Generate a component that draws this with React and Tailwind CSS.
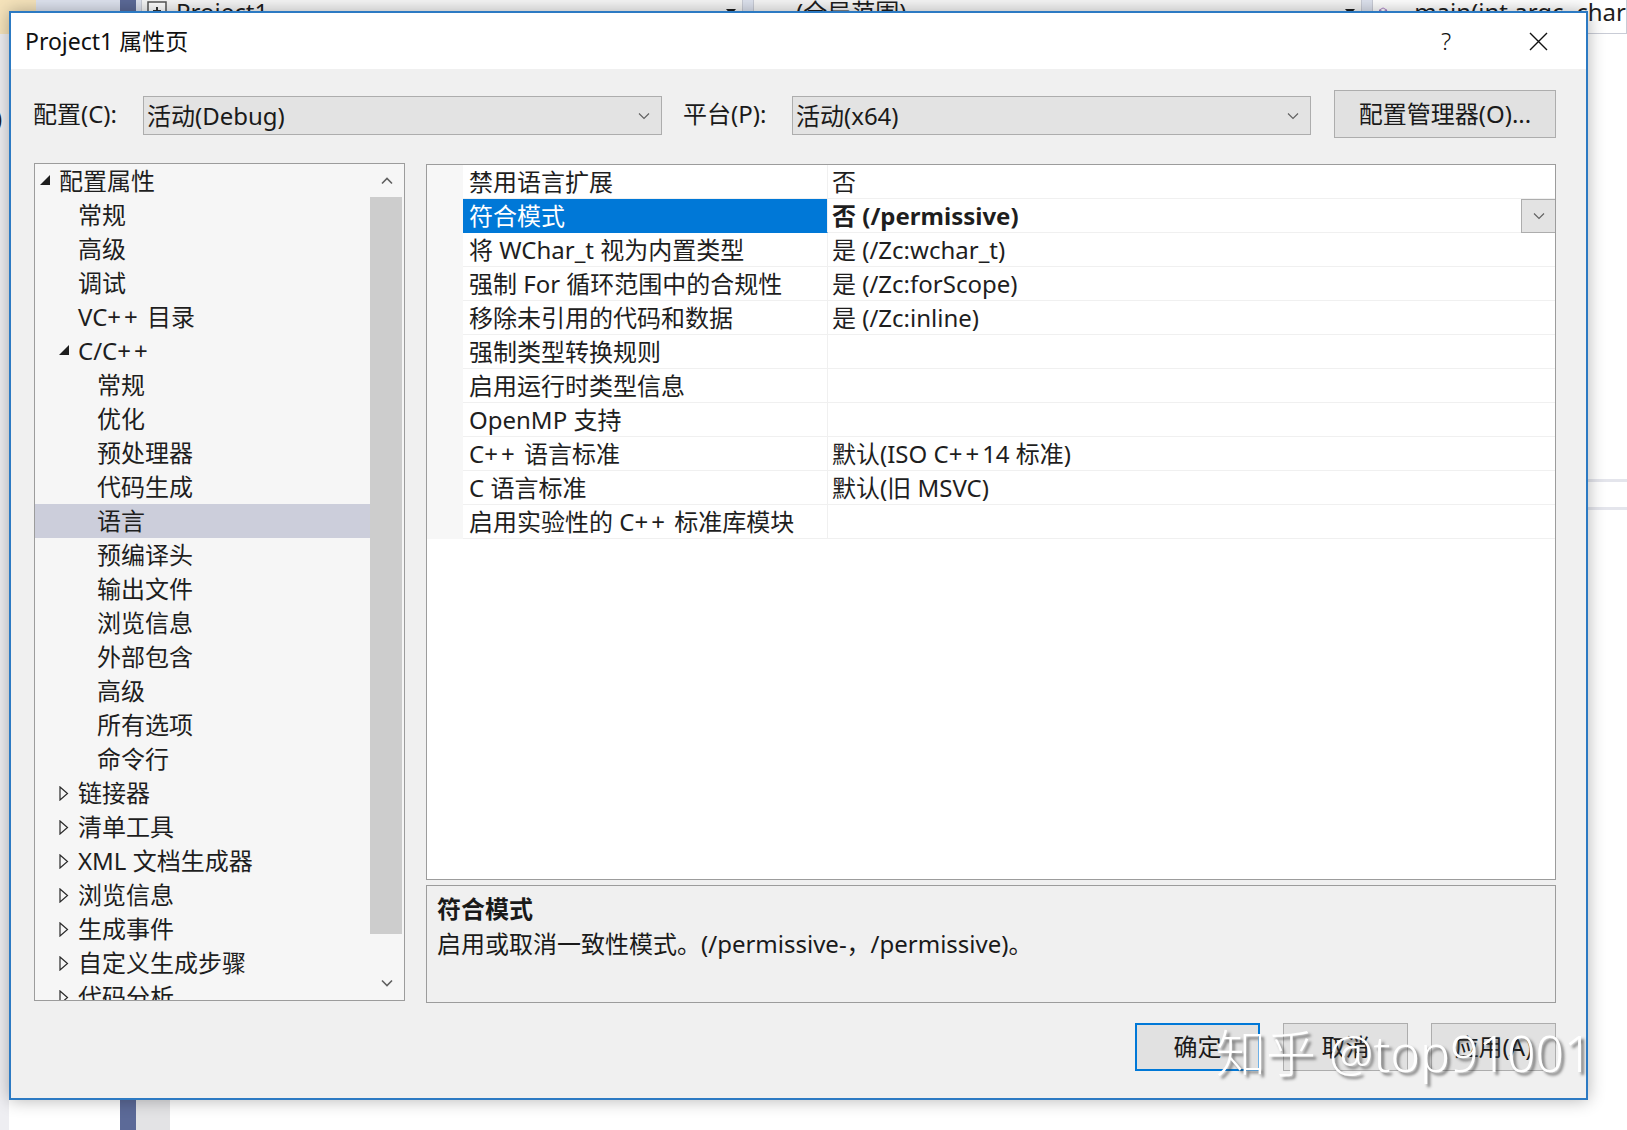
import React from "react";

const FONT = "font-['Noto_Sans','Noto_Sans_CJK_SC',sans-serif]";

// Segoe UI draws "++" with a visible gap between the signs
const Txt = ({ children }) => {
  const parts = String(children).split("++");
  return (
    <>
      {parts.map((p, i) => (
        <React.Fragment key={i}>
          {p}
          {i < parts.length - 1 && <span className="tracking-[3px]">++</span>}
        </React.Fragment>
      ))}
    </>
  );
};

const Chevron = ({ w = 12, h = 8, stroke = "#5f5f5f", sw = 1.1 }) => (
  <svg width={w} height={h} viewBox="0 0 12 8" fill="none">
    <path d="M1 1.5 L6 6.5 L11 1.5" stroke={stroke} strokeWidth={sw} />
  </svg>
);

const OpenArrow = () => (
  <svg width="10" height="10" viewBox="0 0 10 10" className="-mt-[3px]">
    <polygon points="10,0 10,10 0,10" fill="#1e1e1e" />
  </svg>
);

const ClosedArrow = () => (
  <svg width="10" height="15" viewBox="0 0 10 15">
    <polygon points="1,1 8.5,7.5 1,14" fill="none" stroke="#2a2a2a" strokeWidth="1.2" />
  </svg>
);

const treeItems = [
  { lv: 0, text: "配置属性", arrow: "open" },
  { lv: 1, text: "常规" },
  { lv: 1, text: "高级" },
  { lv: 1, text: "调试" },
  { lv: 1, text: "VC++ 目录" },
  { lv: 1, text: "C/C++", arrow: "open" },
  { lv: 2, text: "常规" },
  { lv: 2, text: "优化" },
  { lv: 2, text: "预处理器" },
  { lv: 2, text: "代码生成" },
  { lv: 2, text: "语言", selected: true },
  { lv: 2, text: "预编译头" },
  { lv: 2, text: "输出文件" },
  { lv: 2, text: "浏览信息" },
  { lv: 2, text: "外部包含" },
  { lv: 2, text: "高级" },
  { lv: 2, text: "所有选项" },
  { lv: 2, text: "命令行" },
  { lv: 1, text: "链接器", arrow: "closed" },
  { lv: 1, text: "清单工具", arrow: "closed" },
  { lv: 1, text: "XML 文档生成器", arrow: "closed" },
  { lv: 1, text: "浏览信息", arrow: "closed" },
  { lv: 1, text: "生成事件", arrow: "closed" },
  { lv: 1, text: "自定义生成步骤", arrow: "closed" },
  { lv: 1, text: "代码分析", arrow: "closed" },
];

const indent = ["pl-[5px]", "pl-[24px]", "pl-[43px]"];

const props = [
  ["禁用语言扩展", "否"],
  ["符合模式", "否 (/permissive)", true],
  ["将 WChar_t 视为内置类型", "是 (/Zc:wchar_t)"],
  ["强制 For 循环范围中的合规性", "是 (/Zc:forScope)"],
  ["移除未引用的代码和数据", "是 (/Zc:inline)"],
  ["强制类型转换规则", ""],
  ["启用运行时类型信息", ""],
  ["OpenMP 支持", ""],
  ["C++ 语言标准", "默认(ISO C++14 标准)"],
  ["C 语言标准", "默认(旧 MSVC)"],
  ["启用实验性的 C++ 标准库模块", ""],
];

const Combo = ({ text }) => (
  <div className="w-[519px] h-[39px] mt-[3px] bg-[#e3e3e3] border border-[#adadad] flex items-center pl-[3px] pr-[11px]">
    <span className="text-[24px] leading-none text-[#1a1a1a] flex-1">{text}</span>
    <Chevron />
  </div>
);

const Tree = () => (
  <div className="w-[371px] h-[838px] border border-[#9c9c9c] bg-[#f6f6f6] flex overflow-hidden">
    <div className="flex-1 flex flex-col overflow-hidden">
      {treeItems.map((it, i) => (
        <div
          key={i}
          className={`h-[34px] shrink-0 flex items-center ${indent[it.lv]} ${it.selected ? "bg-[#cccedb]" : ""}`}
        >
          <span className="w-[19px] shrink-0 flex items-center">
            {it.arrow === "open" && <OpenArrow />}
            {it.arrow === "closed" && <ClosedArrow />}
          </span>
          <span className="text-[24px] leading-none text-[#1e1e1e] whitespace-nowrap">
            <Txt>{it.text}</Txt>
          </span>
        </div>
      ))}
    </div>
    <div className="w-[34px] shrink-0 flex flex-col">
      <div className="h-[33px] flex items-center justify-center">
        <svg width="12" height="8" viewBox="0 0 12 8" fill="none">
          <path d="M1 6.5 L6 1.5 L11 6.5" stroke="#606060" strokeWidth="1.6" />
        </svg>
      </div>
      <div className="flex-1 flex flex-col pr-[2px]">
        <div className="h-[737px] bg-[#cdcdcd]" />
      </div>
      <div className="h-[34px] flex items-center justify-center">
        <Chevron stroke="#606060" sw={1.6} />
      </div>
    </div>
  </div>
);

const Grid = () => (
  <div className="w-[1130px] h-[716px] border border-[#9c9c9c] bg-white flex flex-col overflow-hidden">
    {props.map(([name, value, sel], i) => (
      <div key={i} className="h-[34px] shrink-0 flex">
        <div className="w-[36px] shrink-0 bg-[#f7f7f7]" />
        <div
          className={`w-[365px] shrink-0 flex items-center pl-[6px] border-b border-r border-[#f0f0f0] text-[24px] leading-none whitespace-nowrap ${
            sel ? "bg-[#0078d7] text-white border-b-[#0078d7]" : "text-[#1e1e1e]"
          }`}
        >
          <span>
            <Txt>{name}</Txt>
          </span>
        </div>
        <div className="flex-1 flex items-center pl-[4px] border-b border-[#f0f0f0] text-[24px] leading-none text-[#1e1e1e] whitespace-nowrap">
          <span className={`flex-1 ${sel ? "font-bold" : ""}`}>
            <Txt>{value}</Txt>
          </span>
          {sel && (
            <div className="w-[34px] h-[34px] bg-[#e3e3e3] border border-[#adadad] border-r-0 flex items-center justify-center">
              <Chevron />
            </div>
          )}
        </div>
      </div>
    ))}
  </div>
);

const Button = ({ children, primary }) => (
  <div
    className={`w-[125px] h-[48px] bg-[#e1e1e1] flex items-center justify-center text-[24px] leading-none text-[#1a1a1a] ${
      primary ? "border-2 border-[#0078d7]" : "border border-[#adadad]"
    }`}
  >
    {children}
  </div>
);

const Background = () => (
  <>
    {/* vertical strips of the IDE behind the dialog */}
    <div className="absolute left-0 top-0 w-[9px] h-full bg-[#eeeef2]" />
    <div className="absolute left-0 top-[19px] w-[8px] h-[2px] bg-[#3a3a3a]" />
    <div className="absolute left-[120px] top-0 w-[16px] h-full bg-[#5c6a98]" />
    <div className="absolute left-[136px] top-0 w-[34px] h-full bg-[#e3e3e5]" />
    {/* toolbar with combo boxes */}
    <div className="absolute left-0 top-[-10px] w-full h-[44px] flex text-[24px] leading-none text-[#1e1e1e]">
      <div className="w-[36px] bg-[#f5e3bb]" />
      <div className="w-[84px] bg-[#dee3ef]" />
      <div className="w-[16px] bg-[#5c6a98]" />
      <div className="w-[5px] bg-[#dee3ef]" />
      <div className="w-[602px] bg-[#f6f6f6] border border-[#c9ccd6] flex items-center pl-[4px] pr-[6px] gap-[6px]">
        <svg width="24" height="24" viewBox="0 0 24 24">
          <rect x="2" y="2" width="18" height="18" fill="#fff" stroke="#555" strokeWidth="1.5" />
          <path d="M7 11 H15 M11 7 V15" stroke="#333" strokeWidth="2" />
        </svg>
        <span className="flex-1">Project1</span>
        <svg width="10" height="6" viewBox="0 0 10 6"><polygon points="0,0 10,0 5,6" fill="#1e1e1e" /></svg>
      </div>
      <div className="w-[10px] bg-[#dee3ef]" />
      <div className="w-[609px] bg-[#f6f6f6] border border-[#c9ccd6] flex items-center pl-[42px] pr-[6px]">
        <span className="flex-1">(全局范围)</span>
        <svg width="10" height="6" viewBox="0 0 10 6"><polygon points="0,0 10,0 5,6" fill="#1e1e1e" /></svg>
      </div>
      <div className="w-[10px] bg-[#dee3ef]" />
      <div className="flex-1 bg-white border border-[#c9ccd6] flex items-center pl-[5px] gap-[26px] whitespace-nowrap overflow-hidden">
        <svg width="20" height="20" viewBox="0 0 20 20" fill="none">
          <path d="M10 2 L17 6 V14 L10 18 L3 14 V6 Z M3 6 L10 10 L17 6 M10 10 V18" stroke="#8a4fb0" strokeWidth="1.4" />
        </svg>
        <span>main(int argc, char</span>
      </div>
    </div>
    <div className="absolute left-0 top-[106px] text-[24px] leading-none text-[#1e1e1e] -translate-x-[5px]">)</div>
    {/* list lines visible on the right */}
    <div className="absolute left-[1588px] right-0 top-[479px] h-[3px] bg-[#e4e5ec]" />
    <div className="absolute left-[1588px] right-0 top-[507px] h-[3px] bg-[#e4e5ec]" />
  </>
);

export default function App() {
  return (
    <div className={`relative w-[1627px] h-[1130px] overflow-hidden bg-white ${FONT}`}>
      <Background />

      {/* dialog window */}
      <div className="absolute left-[9px] top-[11px] w-[1579px] h-[1089px] border-2 border-[#2c7ac3] bg-[#f0f0f0] shadow-[0_0_16px_rgba(0,0,0,0.3)] flex flex-col">
        {/* title bar */}
        <div className="h-[56px] shrink-0 bg-white flex items-center pl-[14px] pr-[38px]">
          <span className="flex-1 text-[23px] leading-none text-[#111]">Project1 属性页</span>
          <span className="w-[20px] text-center text-[24px] leading-none font-light text-[#111]">?</span>
          <svg className="ml-[73px]" width="19" height="19" viewBox="0 0 19 19">
            <path d="M1 1 L18 18 M18 1 L1 18" stroke="#111" strokeWidth="1.4" />
          </svg>
        </div>

        {/* body */}
        <div className="flex-1 flex flex-col pl-[23px] pr-[30px] pt-[21px]">
          {/* config row */}
          <div className="h-[48px] flex items-center">
            <span className="w-[110px] text-[24px] leading-none text-[#1a1a1a] -ml-[1px]">配置(C):</span>
            <Combo text="活动(Debug)" />
            <span className="w-[109px] ml-[21px] text-[24px] leading-none text-[#1a1a1a]">平台(P):</span>
            <Combo text="活动(x64)" />
            <div className="ml-auto w-[222px] h-[48px] bg-[#e1e1e1] border border-[#adadad] flex items-center justify-center text-[24px] leading-none text-[#1a1a1a]">
              配置管理器(O)...
            </div>
          </div>

          {/* main area */}
          <div className="mt-[25px] flex items-start gap-[21px]">
            <Tree />
            <div className="mt-[1px] flex flex-col">
              <Grid />
              <div className="mt-[5px] w-[1130px] h-[118px] border border-[#9c9c9c] bg-[#f0f0f0] pl-[10px] pt-[6px] text-[24px] text-[#1a1a1a]">
                <div className="font-bold leading-[34px]">符合模式</div>
                <div className="leading-[36px]">启用或取消一致性模式。(/permissive-，/permissive)。</div>
              </div>
            </div>
          </div>

          {/* buttons */}
          <div className="mt-[20px] flex justify-end gap-[23px]">
            <Button primary>确定</Button>
            <Button>取消</Button>
            <Button>应用(A)</Button>
          </div>
        </div>
      </div>

      {/* watermark */}
      <div className="absolute left-[1216px] top-[1028px] text-[50px] leading-none text-white font-light whitespace-nowrap pointer-events-none [text-shadow:3px_3px_3px_rgba(60,60,60,0.65)]">
        知乎 @top91001
      </div>
    </div>
  );
}
